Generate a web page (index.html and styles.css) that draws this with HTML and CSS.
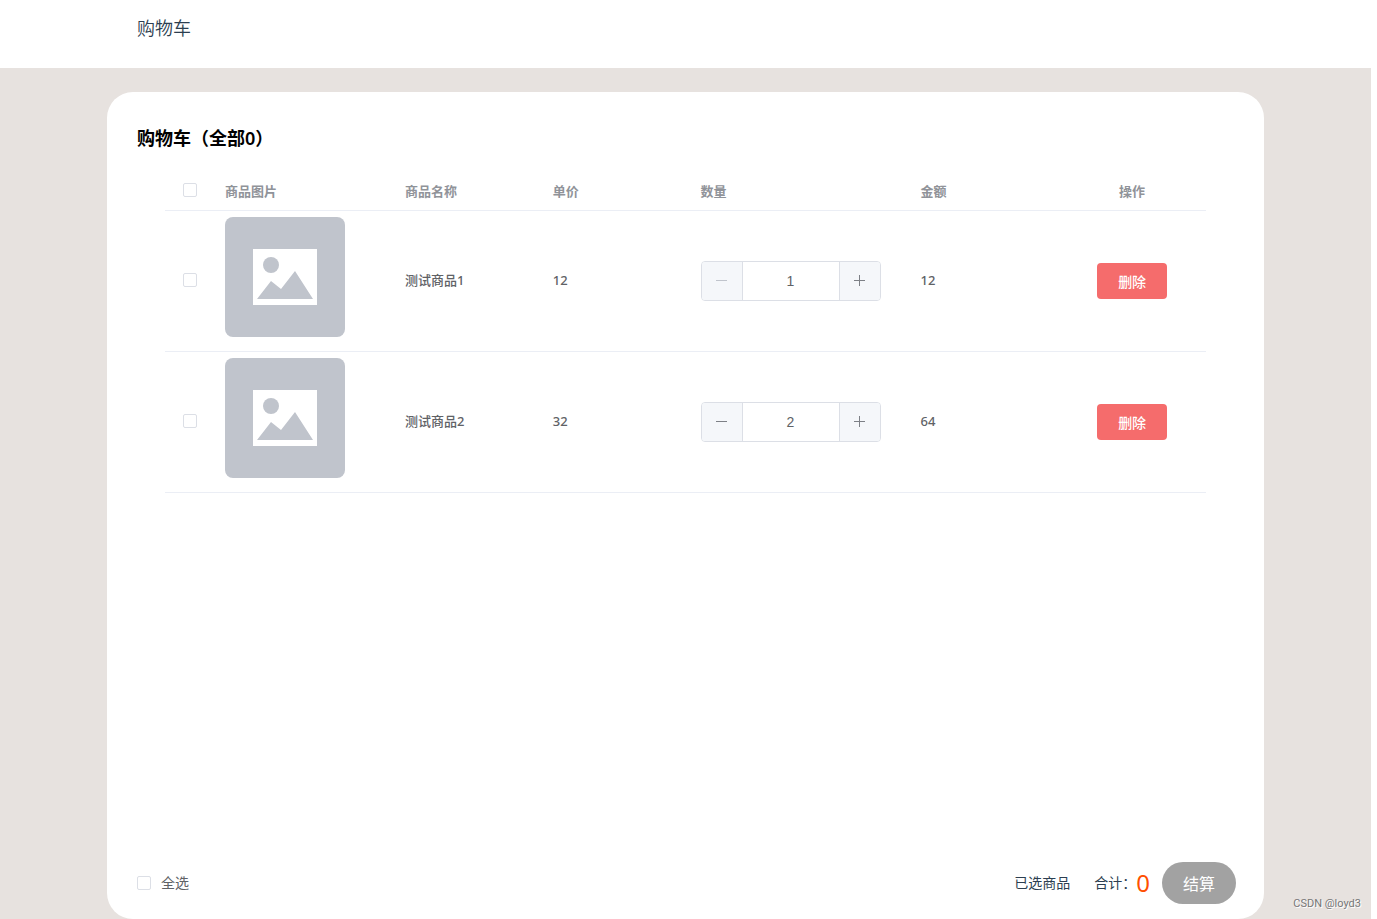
FILE: index.html
```html
<!DOCTYPE html>
<html lang="zh-CN">
<head>
<meta charset="utf-8">
<title>购物车</title>
<link rel="stylesheet" href="styles.css">
</head>
<body>
<svg class="sprite" aria-hidden="true">
  <symbol id="picture" viewBox="0 0 120 120">
    <rect width="120" height="120" fill="#c0c4cc"/>
    <rect x="28" y="32" width="64" height="56" fill="#fff"/>
    <circle cx="46" cy="48" r="8" fill="#c0c4cc"/>
    <path d="M32 82L46 64L56 72L70 54L88 82Z" fill="#c0c4cc"/>
  </symbol>
  <symbol id="minus" viewBox="0 0 12 12"><path d="M0 5.5H11" stroke="currentColor"/></symbol>
  <symbol id="plus" viewBox="0 0 12 12"><path d="M0 5.5H11M5.5 0V11" stroke="currentColor"/></symbol>
</svg>
<div class="page">
  <header class="topbar">购物车</header>
  <main class="content">
    <section class="card">
      <h1 class="title">购物车（全部0）</h1>
      <div class="list">
        <table class="goods">
          <colgroup>
            <col class="col-check"><col class="col-image"><col><col><col class="col-count"><col><col>
          </colgroup>
          <thead>
            <tr>
              <th class="select"><input class="check" type="checkbox" aria-label="选择全部商品"></th>
              <th>商品图片</th><th>商品名称</th><th>单价</th><th>数量</th><th>金额</th><th class="action">操作</th>
            </tr>
          </thead>
          <tbody>
            <tr>
              <td class="select"><input class="check" type="checkbox" aria-label="选择测试商品1"></td>
              <td><svg class="thumb" role="img" aria-label="商品图片"><use href="#picture"/></svg></td>
              <td class="text">测试商品1</td>
              <td class="text">12</td>
              <td>
                <div class="stepper">
                  <button class="step" type="button" aria-label="减少" disabled><svg class="sign"><use href="#minus"/></svg></button>
                  <input class="count" type="text" value="1" aria-label="测试商品1数量">
                  <button class="step" type="button" aria-label="增加"><svg class="sign"><use href="#plus"/></svg></button>
                </div>
              </td>
              <td class="text">12</td>
              <td class="action"><button class="remove" type="button">删除</button></td>
            </tr>
            <tr>
              <td class="select"><input class="check" type="checkbox" aria-label="选择测试商品2"></td>
              <td><svg class="thumb" role="img" aria-label="商品图片"><use href="#picture"/></svg></td>
              <td class="text">测试商品2</td>
              <td class="text">32</td>
              <td>
                <div class="stepper">
                  <button class="step" type="button" aria-label="减少"><svg class="sign"><use href="#minus"/></svg></button>
                  <input class="count" type="text" value="2" aria-label="测试商品2数量">
                  <button class="step" type="button" aria-label="增加"><svg class="sign"><use href="#plus"/></svg></button>
                </div>
              </td>
              <td class="text">64</td>
              <td class="action"><button class="remove" type="button">删除</button></td>
            </tr>
          </tbody>
        </table>
      </div>
      <footer class="summary">
        <label class="all"><input class="check" type="checkbox">全选</label>
        <div class="totals">
          <span class="chosen">已选商品</span>
          <span>合计：</span>
          <strong class="sum">0</strong>
          <button class="checkout" type="button">结算</button>
        </div>
      </footer>
    </section>
    <span class="credit">CSDN @loyd3</span>
  </main>
</div>
</body>
</html>
```
FILE: styles.css
```css
* {
  box-sizing: border-box;
}

body {
  margin: 0;
  background: #fff;
  color: #2c3e50;
  font: 14px/20px "Noto Sans", "Noto Sans CJK SC", sans-serif;
}

button,
input {
  margin: 0;
  font-family: inherit;
}

.sprite {
  display: none;
}

.page {
  display: flex;
  flex-direction: column;
  min-height: 100vh;
  margin-right: 6px;
}

.topbar {
  height: 68px;
  padding: 16px 137px;
  font-size: 18px;
  font-weight: 350;
  line-height: 24px;
}

.content {
  position: relative;
  display: flex;
  flex: 1;
  padding: 24px 107px 0;
  background: #e7e2df;
}

.card {
  display: flex;
  flex: 1;
  flex-direction: column;
  padding: 32px 28px 15px 30px;
  border-radius: 26px;
  background: #fff;
}

.title {
  margin: 0;
  color: #000;
  font-size: 18px;
  font-weight: 600;
  line-height: 28px;
}

.list {
  flex: 1;
  padding: 20px 30px 0 28px;
}

.goods {
  width: 100%;
  border-collapse: separate;
  border-spacing: 0;
  table-layout: fixed;
  color: #606266;
  font-size: 13px;
}

.col-check {
  width: 50px;
}

.col-image {
  width: 180px;
}

.col-count {
  width: 220px;
}

.goods th,
.goods td {
  padding: 0 10px;
  border-bottom: 1px solid #ebeef5;
  text-align: left;
  vertical-align: middle;
}

.goods th {
  height: 39px;
  color: #909399;
  font-weight: 600;
}

.goods td {
  height: 141px;
}

.goods .text {
  padding-bottom: 2px;
  font-weight: 500;
}

.goods .select {
  padding: 0 0 2px;
}

.goods .action {
  text-align: center;
}

.check {
  display: block;
  width: 14px;
  height: 14px;
  border: 1px solid #dcdfe6;
  border-radius: 2px;
  background: #fff;
  appearance: none;
}

.select .check {
  margin: 0 auto;
}

.check:checked {
  border-color: #409eff;
  background: #409eff;
}

.thumb {
  display: block;
  width: 120px;
  height: 120px;
  margin-bottom: 8px;
  border-radius: 8px;
}

.stepper {
  display: flex;
  width: 180px;
  height: 40px;
  overflow: hidden;
  border: 1px solid #dcdfe6;
  border-radius: 4px;
}

.step {
  display: flex;
  flex: 0 0 40px;
  align-items: center;
  justify-content: center;
  padding: 0;
  border: 0;
  background: #f5f7fa;
  color: #7d8086;
}

.step:disabled {
  color: #c0c4cc;
}

.sign {
  width: 12px;
  height: 12px;
}

.count {
  flex: 1;
  min-width: 0;
  padding: 0;
  border: solid #dcdfe6;
  border-width: 0 1px;
  color: #606266;
  font: 14px "Liberation Sans", sans-serif;
  text-align: center;
}

.remove {
  width: 70px;
  height: 36px;
  padding: 0;
  border: 0;
  border-radius: 4px;
  background: #f56c6c;
  color: #fff;
  font-size: 14px;
  font-weight: 500;
}

.summary {
  display: flex;
  align-items: center;
  justify-content: space-between;
}

.all {
  display: flex;
  align-items: center;
  gap: 10px;
  color: #606266;
}

.totals {
  display: flex;
  align-items: center;
}

.chosen {
  margin-right: 24px;
}

.sum {
  margin-right: 12px;
  color: #ff5000;
  font-size: 24px;
  font-weight: 400;
}

.checkout {
  width: 74px;
  height: 42px;
  padding: 0;
  border: 0;
  border-radius: 21px;
  background: #a2a2a2;
  color: #fff;
  font-size: 16px;
}

.credit {
  position: absolute;
  right: 10px;
  bottom: 5px;
  color: #777;
  font-family: Roboto, sans-serif;
  font-size: 11px;
  text-shadow: 1px 1px #fff;
}
```
